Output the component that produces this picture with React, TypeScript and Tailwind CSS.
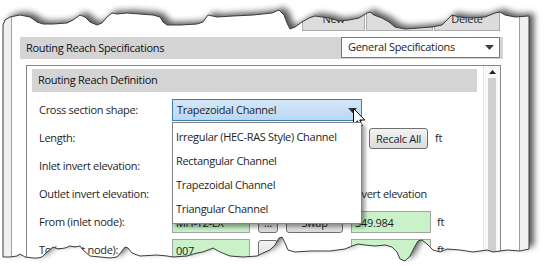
import { type FC, type ReactNode } from 'react';

// outline of the torn paper piece (clockwise, top edge first)
const TORN_POINTS = [
  [3, 25], [5, 20], [10, 17], [20, 15], [30, 17], [37, 22], [43, 24], [53, 24], [67, 23], [73, 20],
  [80, 15], [85, 17], [90, 22], [97, 25], [102, 23], [107, 17], [112, 13], [117, 14], [127, 13],
  [140, 14], [153, 15], [160, 17], [163, 22], [167, 25], [180, 25], [197, 24], [203, 22], [208, 15],
  [217, 17], [233, 16], [253, 15], [272, 13], [279, 10], [284, 15], [287, 23], [290, 29], [295, 27],
  [302, 22], [309, 18], [315, 16], [322, 17], [329, 18], [339, 21], [349, 20], [359, 18], [367, 13],
  [370, 12], [374, 15], [382, 18], [389, 22], [395, 27], [405, 29], [419, 28], [432, 27], [442, 25],
  [449, 18], [452, 15], [459, 17], [472, 18], [485, 17], [495, 13], [500, 12], [505, 15], [515, 17],
  [529, 16],
  // right side
  [529, 249],
  // bottom edge, right to left
  [520, 251], [507, 250], [493, 252], [487, 250], [473, 252], [460, 250], [447, 249], [440, 252],
  [433, 250], [427, 244], [422, 240], [418, 241], [414, 248], [410, 256], [405, 261], [400, 259],
  [397, 252], [392, 247], [385, 245], [375, 246], [365, 245], [358, 244], [352, 246], [345, 249],
  [330, 251], [310, 251], [295, 252], [288, 250], [285, 243], [282, 237], [279, 238], [275, 245],
  [270, 250], [263, 253], [257, 256], [243, 257], [230, 256], [220, 252], [213, 248], [203, 252],
  [197, 253], [187, 256], [173, 257], [167, 256], [157, 255], [140, 256], [132, 253], [128, 248],
  [125, 247], [122, 251], [117, 257], [110, 258], [100, 257], [90, 256], [83, 250], [80, 246],
  [75, 247], [70, 246], [65, 248], [58, 249], [53, 247], [47, 252], [42, 257], [38, 258], [33, 258],
  [25, 257], [20, 254], [17, 256], [10, 257], [3, 257],
];

const tornPath = 'M' + TORN_POINTS.map(([x, y]) => `${x} ${y}`).join('L') + 'Z';

const TornEdges: FC = () => (
  <svg className="absolute inset-0 pointer-events-none" width={545} height={266} viewBox="0 0 545 266">
    <defs>
      <filter id="torn-blur" x="-10%" y="-20%" width="120%" height="140%">
        <feGaussianBlur stdDeviation="3.2" />
      </filter>
      <clipPath id="torn-outside">
        <path d={`M0 0H545V266H0Z${tornPath}`} clipRule="evenodd" />
      </clipPath>
    </defs>
    <path d={`M0 0H545V266H0Z${tornPath}`} fill="#ffffff" fillRule="evenodd" />
    <g clipPath="url(#torn-outside)">
      <path d={tornPath} transform="translate(5,-3)" fill="#000" opacity="0.65" filter="url(#torn-blur)" />
    </g>
    <path d={tornPath} fill="none" stroke="#3c3c3c" strokeWidth="1" strokeLinejoin="round" />
  </svg>
);

const GreenBox: FC<{ width: string; children?: ReactNode }> = ({ width, children }) => (
  <div className={`${width} h-[22px] bg-[#c9f2c9] border border-[#a3a3a3] flex items-center pl-[3px] leading-none`}>
    {children}
  </div>
);

const Btn: FC<{ width: string; children: ReactNode }> = ({ width, children }) => (
  <div
    className={`${width} h-[21px] rounded-[3px] border border-[#707070] bg-gradient-to-b from-[#f3f3f3] to-[#dcdcdc] flex items-center justify-center leading-none`}
  >
    {children}
  </div>
);

const Row: FC<{ label: string; children?: ReactNode }> = ({ label, children }) => (
  <div className="h-[28px] flex items-center pl-[7px]">
    <div className="w-[133px] shrink-0">{label}</div>
    {children}
  </div>
);

const Cursor: FC = () => (
  <svg className="absolute left-[181px] top-[9px]" width="13" height="20" viewBox="0 0 13 20">
    <path d="M0.5 0.5V16.5L4.5 12.8L7.2 19L9.4 18L6.8 12H11.8Z" fill="#fff" stroke="#000" strokeWidth="1" strokeLinejoin="round" />
  </svg>
);

const App: FC = () => {
  return (
    <div className="relative w-[545px] h-[266px] bg-white overflow-hidden font-['Segoe_UI','Open_Sans',sans-serif] text-[11px] tracking-[-0.3px] text-[#1e1e1e]">
      <div className="flex h-full pl-[3px]">
        <div className="w-[9px] bg-[#f0f0f0] border-r border-[#a0a0a0]" />

        <div className="w-[507px] flex flex-col pl-[8px] pr-[16px] pt-[8px]">
          <div className="flex justify-end pr-[3px] gap-[1px]">
            <div className="w-[63px] h-[23px] bg-[#dcdcdc] border border-[#acacac] flex items-center justify-center">New</div>
            <div className="w-[67px] h-[23px] bg-[#dcdcdc] border border-[#acacac] flex items-center justify-center">Copy</div>
            <div className="w-[66px] h-[23px] bg-[#dcdcdc] border border-[#acacac] flex items-center justify-center">Delete</div>
          </div>

          <div className="mt-[6px] h-[22px] bg-[#d4d4d4] flex items-start justify-between pl-[6px] pr-[3px]">
            <div className="h-[22px] flex items-center text-[#111]">Routing Reach Specifications</div>
            <div className="w-[159px] h-[21px] bg-white border border-[#76768a] flex items-center justify-between pl-[6px] pr-[5px]">
              <span>General Specifications</span>
              <svg width="9" height="5" viewBox="0 0 9 5">
                <path d="M0 0H9L4.5 5Z" fill="#404040" />
              </svg>
            </div>
          </div>

          <div className="mt-[6px] ml-[6px] w-[475px] flex-1 border border-b-0 border-[#828790] flex">
            <div className="w-[456px] pl-[5px] pr-[6px] pt-[3px]">
              <div className="h-[23px] bg-[#d4d4d4] pl-[6px] flex items-center text-[#111]">Routing Reach Definition</div>

              <div className="mt-[4px]">
                <Row label="Cross section shape:">
                  <div className="relative">
                    <div className="w-[190px] h-[22px] bg-gradient-to-b from-[#d3e7f9] to-[#bcd7f3] border border-[#3c7fb1] flex items-center justify-between pl-[4px] pr-[4px]">
                      <span>Trapezoidal Channel</span>
                      <svg width="9" height="5" viewBox="0 0 9 5">
                        <path d="M0 0H9L4.5 5Z" fill="#333" />
                      </svg>
                    </div>
                    <Cursor />
                    <div className="absolute left-0 top-[23px] z-10 w-[190px] py-[2px] bg-white border border-[#828282] shadow-[3px_3px_4px_rgba(0,0,0,0.4)]">
                      {['Irregular (HEC-RAS Style) Channel', 'Rectangular Channel', 'Trapezoidal Channel', 'Triangular Channel'].map((item) => (
                        <div key={item} className="h-[24px] flex items-center pl-[3px]">
                          {item}
                        </div>
                      ))}
                    </div>
                  </div>
                </Row>
                <Row label="Length:">
                  <GreenBox width="w-[190px]" />
                  <div className="ml-[7px]">
                    <Btn width="w-[59px]">Recalc All</Btn>
                  </div>
                  <span className="ml-[7px]">ft</span>
                </Row>
                <Row label="Inlet invert elevation:">
                  <GreenBox width="w-[78px]" />
                </Row>
                <Row label="Outlet invert elevation:">
                  <GreenBox width="w-[78px]" />
                  <div className="w-[177px] text-right">Use inlet invert elevation</div>
                </Row>
                <Row label="From (inlet node):">
                  <GreenBox width="w-[78px]">MH-T2-EX</GreenBox>
                  <div className="ml-[8px]">
                    <Btn width="w-[20px]">...</Btn>
                  </div>
                  <div className="ml-[8px]">
                    <Btn width="w-[57px]">Swap</Btn>
                  </div>
                  <div className="ml-[8px]">
                    <GreenBox width="w-[80px]">549.984</GreenBox>
                  </div>
                  <span className="ml-[6px]">ft</span>
                </Row>
                <Row label="To (outlet node):">
                  <GreenBox width="w-[78px]">007</GreenBox>
                  <div className="ml-[8px]">
                    <Btn width="w-[20px]">...</Btn>
                  </div>
                  <div className="ml-[73px]">
                    <GreenBox width="w-[80px]">545.364</GreenBox>
                  </div>
                  <span className="ml-[6px]">ft</span>
                </Row>
              </div>
            </div>

            <div className="w-[17px] border-l border-[#e3e3e3] bg-[#f8f8f8] flex flex-col items-center">
              <svg className="mt-[4px]" width="7" height="4" viewBox="0 0 7 4">
                <path d="M0 4H7L3.5 0Z" fill="#222" />
              </svg>
              <div className="mt-[4px] w-[8px] flex-1 bg-[#cfcfcf]" />
            </div>
          </div>
        </div>

        <div className="w-[10px] bg-[#f0f0f0] border-l border-[#a0a0a0]" />
      </div>

      <TornEdges />
    </div>
  );
};

export default App;
